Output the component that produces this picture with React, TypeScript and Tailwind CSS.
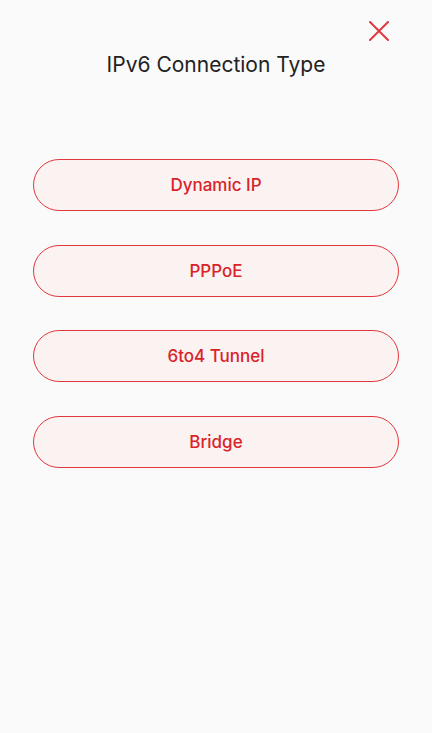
import React from "react";

export default function App() {
  const items = ["Dynamic IP", "PPPoE", "6to4 Tunnel", "Bridge"];
  return (
    <div className="w-[432px] h-[733px] bg-[#fafafa] relative" style={{ fontFamily: "Inter, 'Noto Sans', sans-serif" }}>
      <button className="absolute left-[369px] top-[21px] w-[20px] h-[20px] flex items-center justify-center">
        <svg width="20" height="20" viewBox="0 0 20 20">
          <path d="M1 1 L19 19 M19 1 L1 19" stroke="#e0383e" strokeWidth="2" strokeLinecap="round" />
        </svg>
      </button>
      <div className="pt-[51px] text-center text-[21px] text-[#222222] leading-[28px]">IPv6 Connection Type</div>
      <div className="flex flex-col gap-[33.6px] px-[33px] pt-[80px]">
        {items.map((t) => (
          <div
            key={t}
            className="h-[52px] rounded-full border border-[#e0383e] bg-[#fbf2f2] flex items-center justify-center pt-[2px] text-[17px] font-medium text-[#d92329]"
          >
            {t}
          </div>
        ))}
      </div>
    </div>
  );
}
